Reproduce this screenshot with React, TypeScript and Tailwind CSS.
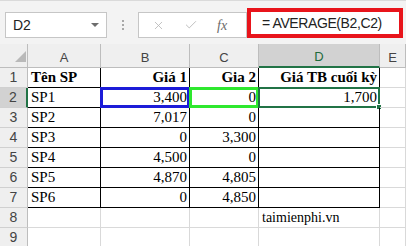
import { X, Check } from 'lucide-react';

const COL_W = ['w-[73px]', 'w-[89px]', 'w-[69px]', 'w-[121px]', 'flex-1'];
const LETTERS = ['A', 'B', 'C', 'D', 'E'];

// rows 1..9, columns A..D (E stays empty)
const DATA: string[][] = [
  ['Tên SP', 'Giá 1', 'Gia 2', 'Giá TB cuối kỳ'],
  ['SP1', '3,400', '0', '1,700'],
  ['SP2', '7,017', '0', ''],
  ['SP3', '0', '3,300', ''],
  ['SP4', '4,500', '0', ''],
  ['SP5', '4,870', '4,805', ''],
  ['SP6', '0', '4,850', ''],
  ['', '', '', 'taimienphi.vn'],
  ['', '', '', ''],
];

function FormulaBar() {
  return (
    <div className="flex h-[44px] items-start border-t border-[#dadada] bg-[#f3f3f3]">
      {/* name box */}
      <div className="ml-[5px] mt-[11px] flex h-[26px] w-[102px] items-center justify-between border border-[#c6c6c6] bg-white pl-[7px] pr-[7px]">
        <span className="text-[14px] text-[#222]">D2</span>
        <span className="h-0 w-0 border-x-[4px] border-t-[4px] border-x-transparent border-t-[#6d6d6d]" />
      </div>
      <div className="mt-[11px] flex h-[26px] w-[31px] flex-col items-center justify-center gap-[2px]">
        <span className="h-[2px] w-[2px] bg-[#a8a8a8]" />
        <span className="h-[2px] w-[2px] bg-[#a8a8a8]" />
        <span className="h-[2px] w-[2px] bg-[#a8a8a8]" />
      </div>
      {/* cancel / enter / fx */}
      <div className="mt-[11px] flex h-[26px] w-[109px] items-center border border-[#c6c6c6] bg-white">
        <X className="ml-[13px] h-[13px] w-[13px] text-[#b5b5b5]" strokeWidth={1.5} />
        <Check className="ml-[19px] h-[14px] w-[14px] text-[#b5b5b5]" strokeWidth={1.5} />
        <span className="ml-[19px] font-['Liberation_Serif',serif] text-[14px] italic text-[#6b6b6b]">fx</span>
      </div>
      {/* formula input, outlined in red */}
      <div className="mt-[7px] flex h-[30px] w-[156px] items-center border-4 border-[#e8141b] bg-white pl-[11px]">
        <span className="whitespace-nowrap text-[14px] tracking-[-0.4px] text-[#222]">= AVERAGE(B2,C2)</span>
      </div>
    </div>
  );
}

function HeaderRow() {
  return (
    <div className="flex h-[24px] bg-[#efefef]">
      <div className="relative w-[28px] border-b border-r border-[#bdbdbd]">
        <svg className="absolute left-[15px] top-[7px]" width="11" height="11" viewBox="0 0 11 11">
          <path d="M11 0 L11 11 L0 11 Z" fill="#b9b9b9" />
        </svg>
      </div>
      {LETTERS.map((l, i) =>
        l === 'D' ? (
          <div key={l} className={`${COL_W[i]} flex items-center justify-center border-b-2 border-r border-b-[#217346] border-r-[#bdbdbd] bg-[#d2d2d2] pt-[4px] text-[13px] text-[#1d6b3c]`}>
            {l}
          </div>
        ) : (
          <div key={l} className={`${COL_W[i]} flex items-center justify-center border-b border-r border-[#bdbdbd] pt-[4px] text-[13px] text-[#444]`}>
            {l}
          </div>
        )
      )}
    </div>
  );
}

function DataRow({ r, cells }: { r: number; cells: string[] }) {
  const inTable = r <= 7;
  const selected = r === 2;
  return (
    <div className="flex h-[20px]">
      <div
        className={`flex w-[28px] items-center justify-center border-b border-[#d0d0d0] text-[14px] text-[#444] ${
          selected ? 'border-r-2 border-r-[#217346] bg-[#d2d2d2]' : 'border-r border-r-[#bdbdbd] bg-[#efefef]'
        }`}
      >
        {r}
      </div>
      {[...cells, ''].map((v, c) => {
        const black = inTable && c <= 3;
        const right = c > 0 && inTable; // the note in D8 is left aligned
        return (
          <div
            key={c}
            className={`${COL_W[c]} relative flex items-center border-b border-r text-black ${
              black ? 'border-black' : 'border-[#d9d9d9]'
            } ${right ? 'justify-end pr-[2px]' : 'justify-start pl-[3px]'} ${r === 1 ? 'font-bold' : ''}`}
          >
            <span className={`whitespace-nowrap font-['Liberation_Serif',serif] leading-none ${inTable ? 'text-[15px]' : 'text-[14px]'}`}>
              {v}
            </span>
            {r === 2 && c === 1 && (
              <div className="absolute -left-px -top-px bottom-[-1px] right-[-1px] border-[3px] border-[#1c1cd8]" />
            )}
            {r === 2 && c === 2 && (
              <div className="absolute -left-px -top-px bottom-[-1px] right-[-1px] border-[3px] border-[#2ee82e]" />
            )}
            {r === 2 && c === 3 && (
              <div className="absolute -left-px -top-px bottom-[-1px] right-[-1px] border-2 border-[#217346]">
                <div className="absolute bottom-[-4px] right-[-4px] h-[6px] w-[6px] border border-white bg-[#217346]" />
              </div>
            )}
          </div>
        );
      })}
    </div>
  );
}

export default function App() {
  return (
    <div className="h-[246px] w-[406px] overflow-hidden bg-white font-['Liberation_Sans',sans-serif]">
      <FormulaBar />
      <HeaderRow />
      {DATA.map((cells, i) => (
        <DataRow key={i} r={i + 1} cells={cells} />
      ))}
    </div>
  );
}
